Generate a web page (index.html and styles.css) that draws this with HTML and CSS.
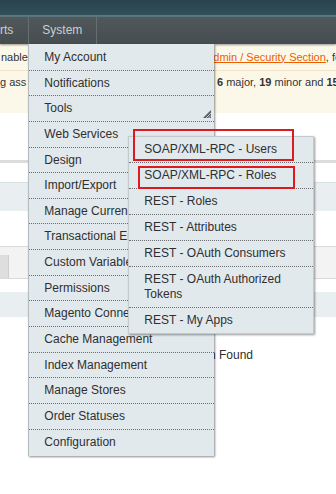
FILE: index.html
```html
<!DOCTYPE html>
<html lang="en">
<head>
  <meta charset="UTF-8" />
  <meta name="viewport" content="width=device-width, initial-scale=1.0"/>
  <title>Magento Admin - System</title>
  <link rel="stylesheet" href="styles.css">
</head>
<body>

<div class="page">
  <div class="topbar"></div>

  <div class="nav">
    <ul class="nav-list">
      <li class="nav-item">rts</li>
      <li class="nav-item active">System
        <ul class="dropdown">
          <li>My Account</li>
          <li>Notifications</li>
          <li class="parent">Tools
            <svg class="arrow" width="8" height="8" viewBox="0 0 8 8">
              <polygon points="8,0 8,8 0,8" fill="#5a5f63"/>
              <line x1="8" y1="3" x2="3" y2="8" stroke="#c9d0d4" stroke-width="1"/>
              <line x1="8" y1="5.5" x2="5.5" y2="8" stroke="#c9d0d4" stroke-width="1"/>
            </svg>
          </li>
          <li class="parent open">Web Services
            <ul class="submenu">
              <li>SOAP/XML-RPC - Users</li>
              <li>SOAP/XML-RPC - Roles</li>
              <li>REST - Roles</li>
              <li>REST - Attributes</li>
              <li>REST - OAuth Consumers</li>
              <li>REST - OAuth Authorized Tokens</li>
              <li>REST - My Apps</li>
            </ul>
          </li>
          <li>Design</li>
          <li>Import/Export</li>
          <li>Manage Currency</li>
          <li>Transactional Emails</li>
          <li>Custom Variables</li>
          <li>Permissions</li>
          <li>Magento Connect</li>
          <li>Cache Management</li>
          <li>Index Management</li>
          <li>Manage Stores</li>
          <li>Order Statuses</li>
          <li>Configuration</li>
        </ul>
      </li>
    </ul>
  </div>

  <div class="messages">
    <div class="msg msg-first">
      <span class="msg-left">nable</span>
      <span class="msg-right"><a href="#">Admin / Security Section</a>, for</span>
    </div>
    <div class="msg msg-second">
      <span class="msg-left">g ass</span>
      <span class="msg-right"><b>6</b> major, <b>19</b> minor and <b>15</b></span>
    </div>
  </div>

  <div class="content">
    <div class="rule"></div>
    <div class="band band-head"></div>
    <div class="tabs"><span class="tab"></span></div>
    <div class="band band-grid"></div>
    <p class="empty">No Extension Found</p>
  </div>

  <div class="mark mark-users"></div>
  <div class="mark mark-roles"></div>
</div>

</body>
</html>
```

FILE: styles.css
```css
body {
  margin: 0;
  font-family: "Liberation Sans", Arial, sans-serif;
  font-size: 12px;
  color: #2f2f2f;
  background: #fff;
}
.page {
  position: relative;
  width: 336px;
  height: 494px;
  overflow: hidden;
}
ul { list-style: none; margin: 0; padding: 0; }

.topbar {
  height: 15px;
  background: linear-gradient(to bottom, #29434d, #31505a);
  border-bottom: 2px solid #5d777d;
}

.nav {
  height: 27px;
  background: linear-gradient(to bottom, #50585b, #464d50);
  box-shadow: 0 1px 2px rgba(0,0,0,0.4);
  position: relative;
  z-index: 2;
}
.nav-list { display: flex; height: 100%; }
.nav-item {
  color: #c9cfd2;
  font-size: 12px;
  line-height: 27px;
  padding: 0 15px 0 0;
}
.nav-item.active {
  position: relative;
  padding: 0 14px 0 13px;
  border-left: 1px solid #676e71;
  border-right: 1px solid #676e71;
}

.dropdown {
  position: absolute;
  top: 27px;
  left: -1px;
  width: 185px;
  padding-top: 1px;
  background: #e2e9ed;
  border-left: 1px solid #b4bcc0;
  box-shadow: 1px 1px 2px rgba(0,0,0,0.45);
  line-height: 15px;
  color: #2f2f2f;
}
.dropdown > li {
  position: relative;
  padding: 5px 0 4.65px 15px;
  border-bottom: 1px dotted #6b6f72;
  white-space: nowrap;
}
.dropdown > li:last-child { border-bottom: none; padding-bottom: 6px; }
.arrow {
  position: absolute;
  right: 3px;
  bottom: 3px;
}

.submenu {
  position: absolute;
  top: 14.5px;
  left: 99px;
  width: 184px;
  background: #e2e9ed;
  border: 1px solid #c3cace;
  box-shadow: 1px 1px 2px rgba(0,0,0,0.4);
  z-index: 3;
}
.submenu li {
  padding: 5px 20px 5px 15px;
  border-bottom: 1px dotted #6b6f72;
  white-space: normal;
}
.submenu li:last-child { border-bottom: none; }

.messages {
  background: #fcf8e9;
  position: relative;
  z-index: 1;
  font-size: 11px;
}
.msg {
  display: flex;
  line-height: 15px;
  color: #333;
}
.msg-first {
  height: 26px;
  align-items: center;
  border-bottom: 1px solid #f3e3c4;
}
.msg-second {
  height: 42px;
  padding-top: 4px;
  box-sizing: border-box;
}
.msg-left { width: 205px; padding-left: 1px; flex-shrink: 0; }
.msg-second .msg-left { width: 217px; padding-left: 0; }
.msg-right { white-space: nowrap; }
.msg-right a { color: #eb5e00; }

.content { padding-top: 47px; }
.rule { height: 3px; background: #dcdcdc; }
.band { background: #e9eef1; }
.band-head {
  margin-top: 19px;
  height: 28px;
  border-top: 1px solid #d9e0e3;
}
.tabs {
  margin-top: 35px;
  height: 31px;
  background: #f3f3f3;
  border-top: 1px solid #dadada;
  border-bottom: 1px solid #dadada;
  display: flex;
  align-items: flex-end;
}
.tab {
  width: 8px;
  height: 23px;
  background: #dedede;
  border-right: 1px solid #cfcfcf;
}
.band-grid {
  margin-top: 13px;
  height: 25px;
}
.empty {
  margin: 31px 0 0;
  width: 253px;
  text-align: right;
  font-size: 12px;
  color: #2f2f2f;
}

.mark {
  position: absolute;
  border: 2px solid #dc1a1f;
  z-index: 5;
}
.mark-users { left: 133px; top: 129px; width: 157px; height: 28px; }
.mark-roles { left: 138px; top: 166px; width: 153px; height: 19px; }
```
